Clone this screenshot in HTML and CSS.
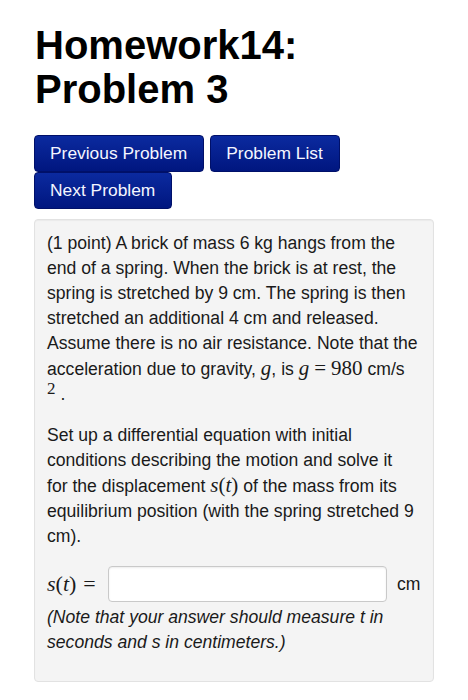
FILE: index.html
```html
<!DOCTYPE html>
<html>
<head>
<meta charset="utf-8">
<link rel="stylesheet" href="styles.css">
</head>
<body>
<div class="page">
  <h1 class="title">Homework14:<br>Problem 3</h1>
  <div class="nav">
    <a class="btn">Previous Problem</a>
    <a class="btn">Problem List</a>
    <a class="btn">Next Problem</a>
  </div>
  <div class="problem">
    <p class="para">(1 point) A brick of mass 6 kg hangs from the end of a spring. When the brick is at rest, the spring is stretched by 9 cm. The spring is then stretched an additional 4 cm and released. Assume there is no air resistance. Note that the acceleration due to gravity, <span class="mi">g</span>, is <span class="mi">g</span><span class="mo">=</span><span class="mn">980</span> cm/s<br><span class="sup">2</span> .</p>
    <p class="para">Set up a differential equation with initial conditions describing the motion and solve it for&nbsp;the displacement <span class="mi">s</span><span class="mn">(</span><span class="mi">t</span><span class="mn">)</span> of the mass from its equilibrium position (with the spring stretched 9 cm).</p>
    <div class="answer">
      <span class="lhs"><span class="mi">s</span><span class="mn">(</span><span class="mi">t</span><span class="mn">)</span><span class="mo">=</span></span>
      <span class="input"></span>
      <span class="unit">cm</span>
    </div>
    <p class="note">(Note that your answer should measure t in seconds and s in centimeters.)</p>
  </div>
</div>
</body>
</html>
```

FILE: styles.css
```css
html, body {
  margin: 0;
  padding: 0;
  background: #ffffff;
}
body {
  font-family: "Liberation Sans", Arial, sans-serif;
  color: #111;
}
.page {
  padding: 0 34px 0 34px;
}
.title {
  margin: 0;
  padding-top: 23px;
  font-size: 40px;
  line-height: 44px;
  font-weight: bold;
  color: #000;
  padding-left: 1px;
}
.nav {
  margin-top: 24px;
  display: flex;
  flex-wrap: wrap;
  column-gap: 6px;
  width: 320px;
}
.btn {
  display: block;
  box-sizing: border-box;
  height: 37px;
  line-height: 35px;
  padding: 0 16px 0 15px;
  font-size: 17.4px;
  color: #f4f6ff;
  background: linear-gradient(#0b2a9f, #00167f);
  border: 1px solid #001069;
  border-radius: 4px;
}
.problem {
  margin-top: 10px;
  box-sizing: border-box;
  width: 400px;
  background: #f4f4f4;
  border: 1px solid #e2e2e2;
  border-radius: 4px;
  padding: 11px 12px 11px 12px;
  font-size: 17.6px;
  line-height: 25px;
  color: #1a1a1a;
  box-shadow: inset 0 1px 1px rgba(0,0,0,0.04);
}
.para {
  margin: 0 0 16px 0;
}
.mi {
  font-family: "Liberation Serif", "Times New Roman", serif;
  font-style: italic;
  font-size: 21px;
}
.mn {
  font-family: "Liberation Serif", "Times New Roman", serif;
  font-size: 21px;
}
.mo {
  font-family: "Liberation Serif", "Times New Roman", serif;
  font-size: 21px;
  margin: 0 5px;
}
.sup {
  font-family: "Liberation Serif", "Times New Roman", serif;
  font-size: 17px;
  position: relative;
  top: -6px;
}
.answer {
  display: flex;
  align-items: center;
  margin-top: 17px;
  height: 36px;
}
.lhs {
  width: 61px;
  flex: none;
  white-space: nowrap;
}
.lhs .mi, .lhs .mn, .lhs .mo {
  font-size: 22px;
}
.lhs .mo {
  margin-right: 0;
  margin-left: 7px;
}
.input {
  flex: none;
  box-sizing: border-box;
  width: 279px;
  height: 36px;
  background: #fff;
  border: 1px solid #c9c9c9;
  border-radius: 4px;
  box-shadow: inset 0 1px 2px rgba(0,0,0,0.08);
}
.unit {
  margin-left: 10px;
}
.note {
  margin: 3px 0 15px 0;
  font-style: italic;
}
```
